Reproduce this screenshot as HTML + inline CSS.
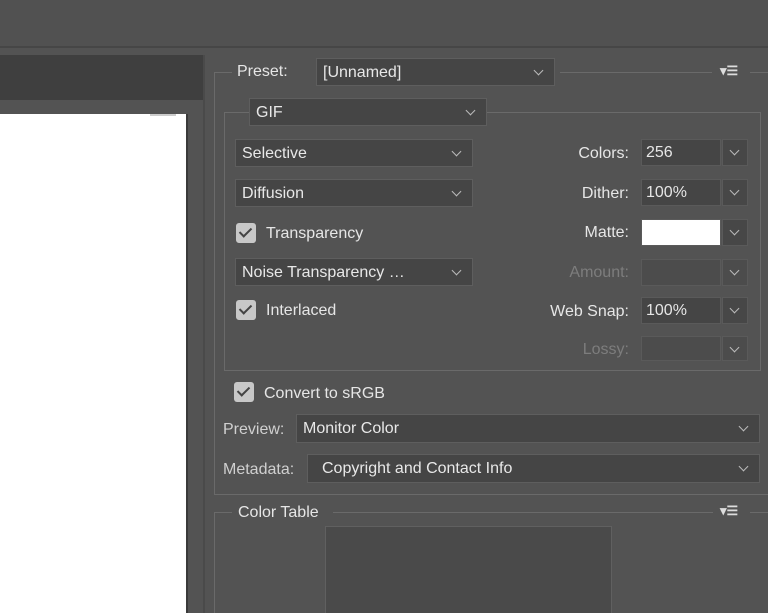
<!DOCTYPE html><html><head><style>
body{margin:0;width:768px;height:613px;overflow:hidden;background:#535353;font-family:"Liberation Sans",sans-serif;font-size:16px;color:#e6e6e6;position:relative}
div{position:absolute;box-sizing:border-box}
.dd{background:#454545;border:1px solid #5e5e5e;color:#e8e8e8;padding-left:6px;line-height:27px}
.dd::after{content:"";position:absolute;right:12px;top:8px;width:6px;height:6px;border-right:1.5px solid #bbb;border-bottom:1.5px solid #bbb;transform:rotate(45deg)}
.lbl{text-align:right;width:120px;left:509px}
.f{left:641px;width:80px;height:27px;background:#454545;border:1px solid #5a5a5a;line-height:26px;padding-left:4px}
.a{left:722px;width:26px;height:27px;background:#474747;border:1px solid #5a5a5a}
.a::after{content:"";position:absolute;left:8px;top:7px;width:6px;height:6px;border-right:1.5px solid #bbb;border-bottom:1.5px solid #bbb;transform:rotate(45deg)}
.cb{width:20px;height:20px;background:#c8c8c8;border-radius:3px}
.cb::after{content:"";position:absolute;left:6px;top:2px;width:5px;height:10px;border-right:2px solid #444;border-bottom:2px solid #444;transform:rotate(45deg)}
.line{background:#6a6a6a}
.dis{color:#7d7d7d}
.menu{font-size:13px;color:#ddd;font-weight:bold}
</style></head><body>
<div style="left:0;top:0;width:768px;height:46px;background:#515151"></div>
<div style="left:0;top:46px;width:768px;height:2px;background:#464646"></div>
<div style="left:0;top:55px;width:203px;height:45px;background:#3f3f3f"></div>
<div style="left:0;top:114px;width:188px;height:499px;background:#fff;border-right:2px solid #3a3a3a"></div>
<div style="left:150px;top:114px;width:26px;height:2px;background:#ccc"></div>
<div style="left:203px;top:55px;width:2px;height:558px;background:#4a4a4a"></div>
<div style="left:214px;top:72px;width:1px;height:422px" class="line"></div>
<div style="left:214px;top:72px;width:18px;height:1px" class="line"></div>
<div style="left:560px;top:72px;width:152px;height:1px" class="line"></div>
<div style="left:750px;top:72px;width:18px;height:1px" class="line"></div>
<div style="left:214px;top:494px;width:554px;height:1px" class="line"></div>
<div style="left:237px;top:63px">Preset:</div>
<div class="dd" style="left:316px;top:58px;width:239px;height:28px">[Unnamed]</div>
<div class="menu" style="left:720px;top:63px">▾☰</div>
<div style="left:224px;top:112px;width:537px;height:259px;border:1px solid #6a6a6a;border-top:none"></div>
<div style="left:224px;top:112px;width:25px;height:1px" class="line"></div>
<div style="left:487px;top:112px;width:274px;height:1px" class="line"></div>
<div class="dd" style="left:249px;top:98px;width:238px;height:28px">GIF</div>
<div class="dd" style="left:235px;top:139px;width:238px;height:28px">Selective</div>
<div class="dd" style="left:235px;top:179px;width:238px;height:28px">Diffusion</div>
<div class="cb" style="left:236px;top:223px"></div><div style="left:266px;top:225px">Transparency</div>
<div class="dd" style="left:235px;top:258px;width:238px;height:28px">Noise Transparency …</div>
<div class="cb" style="left:236px;top:300px"></div><div style="left:266px;top:302px">Interlaced</div>
<div class="lbl" style="top:145px">Colors:</div><div class="f" style="top:139px">256</div><div class="a" style="top:139px"></div>
<div class="lbl" style="top:185px">Dither:</div><div class="f" style="top:179px">100%</div><div class="a" style="top:179px"></div>
<div class="lbl" style="top:224px">Matte:</div><div class="f" style="top:219px;background:#fff"></div><div class="a" style="top:219px"></div>
<div class="lbl dis" style="top:264px">Amount:</div><div class="f" style="top:259px;background:#4c4c4c"></div><div class="a" style="top:259px;background:#4c4c4c"></div>
<div class="lbl" style="top:303px">Web Snap:</div><div class="f" style="top:297px">100%</div><div class="a" style="top:297px"></div>
<div class="lbl dis" style="top:341px">Lossy:</div><div class="f" style="top:336px;background:#4c4c4c;height:25px"></div><div class="a" style="top:336px;background:#4c4c4c;height:25px"></div>
<div class="cb" style="left:234px;top:382px"></div><div style="left:264px;top:385px">Convert to sRGB</div>
<div style="left:223px;top:421px;color:#d0d0d0">Preview:</div>
<div class="dd" style="left:296px;top:414px;width:464px;height:29px">Monitor Color</div>
<div style="left:223px;top:461px;color:#d0d0d0">Metadata:</div>
<div class="dd" style="left:307px;top:454px;width:453px;height:29px;padding-left:14px">Copyright and Contact Info</div>
<div style="left:214px;top:512px;width:1px;height:101px" class="line"></div>
<div style="left:214px;top:512px;width:18px;height:1px" class="line"></div>
<div style="left:333px;top:512px;width:380px;height:1px" class="line"></div>
<div style="left:750px;top:512px;width:18px;height:1px" class="line"></div>
<div style="left:238px;top:504px">Color Table</div>
<div class="menu" style="left:720px;top:503px">▾☰</div>
<div style="left:325px;top:526px;width:287px;height:87px;background:#4a4a4a;border:1px solid #606060;border-bottom:none"></div>
</body></html>
